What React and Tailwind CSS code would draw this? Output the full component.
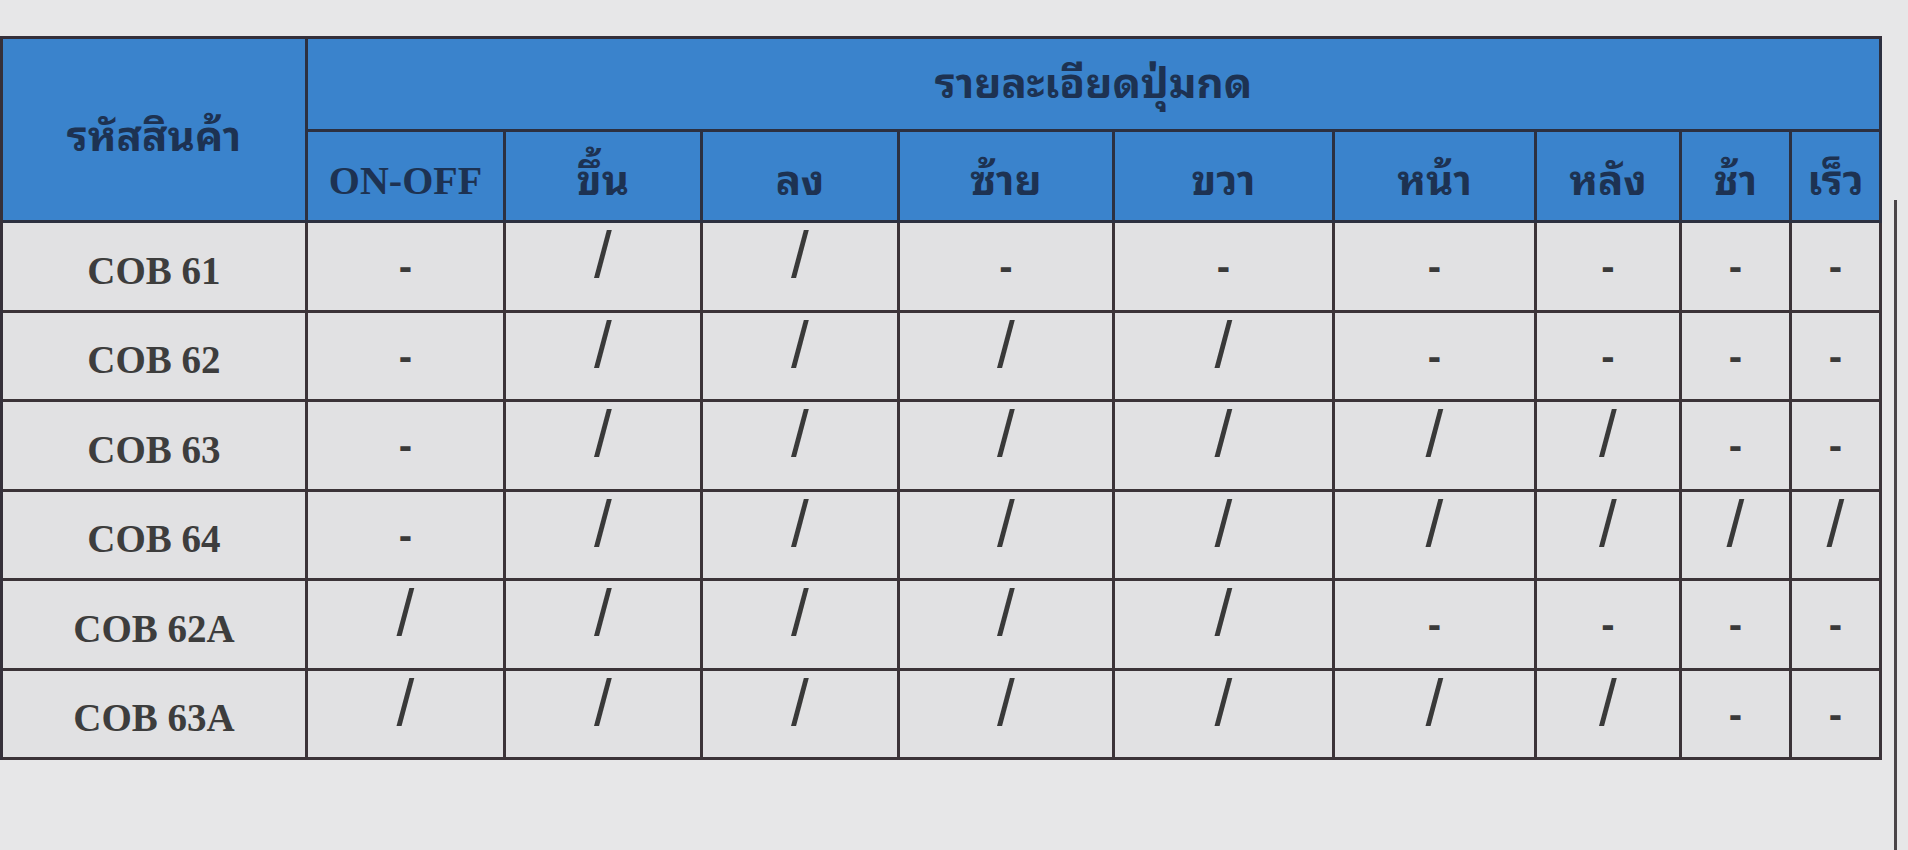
import React from "react";

const thai = { fontFamily: '"Noto Sans Thai Looped", "Noto Serif Thai", "Noto Sans Thai", "Noto Sans", "DejaVu Sans", sans-serif' };
const serif = { fontFamily: '"Liberation Serif", "Times New Roman", serif' };
const sans = { fontFamily: '"Liberation Sans", Arial, sans-serif' };

const cols = ["ON-OFF", "ขึ้น", "ลง", "ซ้าย", "ขวา", "หน้า", "หลัง", "ช้า", "เร็ว"];

const rows = [
  ["COB 61", "-", "/", "/", "-", "-", "-", "-", "-", "-"],
  ["COB 62", "-", "/", "/", "/", "/", "-", "-", "-", "-"],
  ["COB 63", "-", "/", "/", "/", "/", "/", "/", "-", "-"],
  ["COB 64", "-", "/", "/", "/", "/", "/", "/", "/", "/"],
  ["COB 62A", "/", "/", "/", "/", "/", "-", "-", "-", "-"],
  ["COB 63A", "/", "/", "/", "/", "/", "/", "/", "-", "-"],
];

function Mark({ v }) {
  if (v === "/") {
    return (
      <span className="text-[64px] leading-none text-[#393939] mb-[22px]" style={sans}>
        /
      </span>
    );
  }
  return (
    <span className="text-[40px] font-bold leading-none text-[#3a3a3a]" style={sans}>
      -
    </span>
  );
}

export default function App() {
  return (
    <div className="w-[1908px] h-[850px] overflow-hidden bg-[#e7e7e8] flex">
      <div className="pt-[36px]">
        <div className="grid grid-cols-[305px_198px_197px_197px_215px_220px_202px_145px_110px_90px] grid-rows-[93px_91px_repeat(6,89.5px)] border-t-[3px] border-l-[3px] border-[#35303a]">
          <div className="row-span-2 bg-[#3a83cc] border-r-[3px] border-b-[3px] border-[#2c3040] flex items-center justify-center pt-[4px]">
            <span className="text-[42px] font-bold text-[#1d3252] leading-none" style={thai}>
              รหัสสินค้า
            </span>
          </div>
          <div className="col-span-9 bg-[#3a83cc] border-r-[3px] border-b-[3px] border-[#2c3040] flex items-center justify-center pb-[10px]">
            <span className="text-[42px] font-bold text-[#1d3252] leading-none" style={thai}>
              รายละเอียดปุ่มกด
            </span>
          </div>
          {cols.map((c) => (
            <div
              key={c}
              className="bg-[#3a83cc] border-r-[3px] border-b-[3px] border-[#2c3040] flex items-center justify-center"
            >
              {c === "ON-OFF" ? (
                <span className="text-[40px] font-bold text-[#1d3252] leading-none pt-[10px]" style={serif}>
                  {c}
                </span>
              ) : (
                <span className="text-[42px] font-bold text-[#1d3252] leading-none" style={thai}>
                  {c}
                </span>
              )}
            </div>
          ))}
          {rows.map((r) =>
            r.map((v, j) => (
              <div
                key={r[0] + j}
                className="bg-[#e1e1e3] border-r-[3px] border-b-[3px] border-[#3b3338] flex items-center justify-center"
              >
                {j === 0 ? (
                  <span className="text-[39px] font-bold text-[#3d3d3d] leading-none pt-[8px]" style={serif}>
                    {v}
                  </span>
                ) : (
                  <Mark v={v} />
                )}
              </div>
            ))
          )}
        </div>
      </div>
      <div className="ml-[12px] mt-[200px] w-[3px] bg-[#4a4548]" />
    </div>
  );
}
